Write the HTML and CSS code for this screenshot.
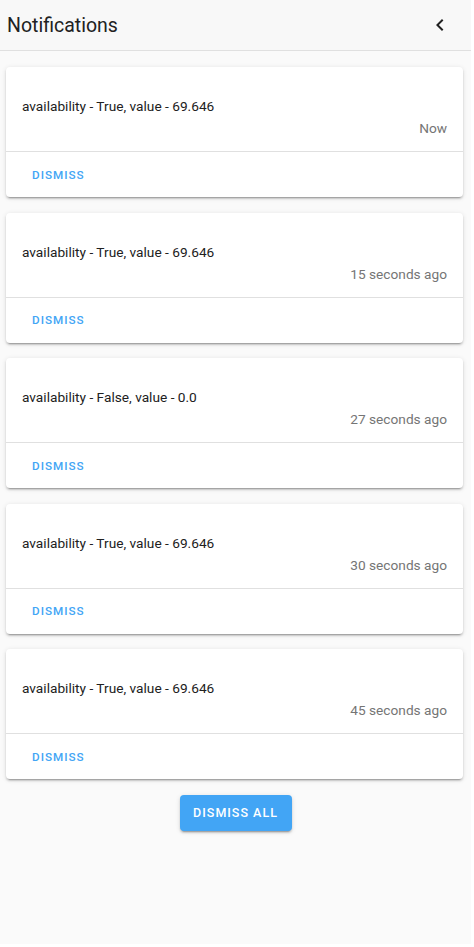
FILE: index.html
```html
<!DOCTYPE html>
<html lang="en">
<head>
    <meta charset="UTF-8">
    <meta name="viewport" content="width=device-width, initial-scale=1.0">
    <title>Notifications</title>
    <link rel="stylesheet" href="styles.css">
</head>
<body>
    <div class="app">
        <header class="toolbar">
            <h1 class="toolbar-title">Notifications</h1>
            <button class="back-btn" aria-label="Back">
                <svg width="24" height="24" viewBox="0 0 24 24"><path d="M15.41 16.59 10.83 12l4.58-4.59L14 6l-6 6 6 6z" fill="#212121"/></svg>
            </button>
        </header>
        <main class="notification-list">
            <div class="notification-card">
                <div class="card-body">
                    <div class="card-text">availability - True, value - 69.646</div>
                    <div class="card-time">Now</div>
                </div>
                <div class="card-actions">
                    <button class="dismiss-btn">Dismiss</button>
                </div>
            </div>
            <div class="notification-card">
                <div class="card-body">
                    <div class="card-text">availability - True, value - 69.646</div>
                    <div class="card-time">15 seconds ago</div>
                </div>
                <div class="card-actions">
                    <button class="dismiss-btn">Dismiss</button>
                </div>
            </div>
            <div class="notification-card">
                <div class="card-body">
                    <div class="card-text">availability - False, value - 0.0</div>
                    <div class="card-time">27 seconds ago</div>
                </div>
                <div class="card-actions">
                    <button class="dismiss-btn">Dismiss</button>
                </div>
            </div>
            <div class="notification-card">
                <div class="card-body">
                    <div class="card-text">availability - True, value - 69.646</div>
                    <div class="card-time">30 seconds ago</div>
                </div>
                <div class="card-actions">
                    <button class="dismiss-btn">Dismiss</button>
                </div>
            </div>
            <div class="notification-card">
                <div class="card-body">
                    <div class="card-text">availability - True, value - 69.646</div>
                    <div class="card-time">45 seconds ago</div>
                </div>
                <div class="card-actions">
                    <button class="dismiss-btn">Dismiss</button>
                </div>
            </div>
            <div class="dismiss-all-row">
                <button class="dismiss-all-btn">Dismiss all</button>
            </div>
        </main>
    </div>
</body>
</html>
```
FILE: styles.css
```css
html, body {
    margin: 0;
    height: 100%;
    background: #ffffff;
}

body {
    font-family: Roboto, 'Noto Sans', sans-serif;
    color: #212121;
}

.app {
    width: 471px;
    height: 944px;
    background: #fafafa;
    display: flex;
    flex-direction: column;
}

.toolbar {
    height: 50px;
    border-bottom: 1px solid #e0e0e0;
    display: flex;
    align-items: center;
    justify-content: space-between;
    padding: 0 19px 0 7px;
    background: #f8f8f8;
}

.toolbar-title {
    margin: 0;
    font-size: 19.5px;
    font-weight: 400;
    color: #212121;
}

.back-btn {
    background: none;
    border: none;
    padding: 0;
    width: 24px;
    height: 24px;
    cursor: pointer;
}

.notification-list {
    padding: 16px 8px 0 6px;
    display: flex;
    flex-direction: column;
    gap: 15.5px;
}

.notification-card {
    background: #fff;
    border-radius: 4px;
    box-shadow: 0 3px 1px -2px rgba(0, 0, 0, 0.2), 0 2px 2px 0 rgba(0, 0, 0, 0.14), 0 1px 5px 0 rgba(0, 0, 0, 0.12);
}

.card-body {
    height: 85px;
    padding: 28px 16px 0;
    box-sizing: border-box;
    border-bottom: 1px solid #e0e0e0;
    font-size: 13.7px;
}

.card-text {
    color: #212121;
    line-height: 22px;
}

.card-time {
    text-align: right;
    color: #757575;
    line-height: 22px;
}

.card-actions {
    height: 45px;
    display: flex;
    align-items: center;
    padding: 0 8px;
}

.dismiss-btn {
    background: none;
    border: none;
    color: #42a5f5;
    font-family: inherit;
    font-size: 11.7px;
    font-weight: 500;
    letter-spacing: 1px;
    text-transform: uppercase;
    padding: 0 18px;
    height: 36px;
    cursor: pointer;
}

.dismiss-all-row {
    display: flex;
    justify-content: center;
    padding-left: 2px;
}

.dismiss-all-btn {
    background: #42a5f5;
    color: #fff;
    border: none;
    border-radius: 4px;
    height: 36px;
    width: 112px;
    padding: 0;
    font-family: inherit;
    font-size: 12.5px;
    font-weight: 500;
    letter-spacing: 1px;
    text-transform: uppercase;
    box-shadow: 0 3px 1px -2px rgba(0, 0, 0, 0.2), 0 2px 2px 0 rgba(0, 0, 0, 0.14), 0 1px 5px 0 rgba(0, 0, 0, 0.12);
    cursor: pointer;
}
```
